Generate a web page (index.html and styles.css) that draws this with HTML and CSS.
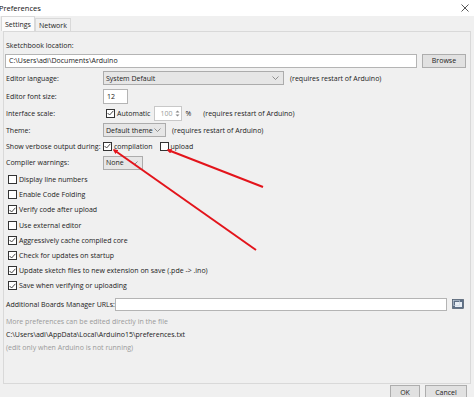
FILE: index.html
```html
<!DOCTYPE html>
<html>
<head>
<meta charset="utf-8">
<link rel="stylesheet" href="styles.css">
</head>
<body>
<div class="titlebar">
  <span class="title">Preferences</span>
  <svg class="close" width="8" height="8" viewBox="0 0 8 8"><path d="M0.5 0.5 L7.5 7.5 M7.5 0.5 L0.5 7.5" stroke="#444" stroke-width="0.9" fill="none"/></svg>
</div>
<div class="tabs">
  <div class="tab active">Settings</div>
  <div class="tab">Network</div>
</div>
<div class="panel">
  <div class="row r-a"><span class="text">Sketchbook location:</span></div>
  <div class="row r-b">
    <div class="field path">C:\Users\adi\Documents\Arduino</div>
    <div class="btn browse">Browse</div>
  </div>
  <div class="row r-c">
    <span class="lbl">Editor language:</span>
    <div class="combo lang"><span>System Default</span><svg class="chev" width="7" height="4" viewBox="0 0 7 4"><path d="M0.5 0.5 L3.5 3.5 L6.5 0.5" stroke="#777" fill="none" stroke-width="0.8"/></svg></div>
    <span class="note">(requires restart of Arduino)</span>
  </div>
  <div class="row r-d">
    <span class="lbl">Editor font size:</span>
    <div class="field size">12</div>
  </div>
  <div class="row r-e">
    <span class="lbl">Interface scale:</span>
    <span class="cb checked"><svg width="7" height="6" viewBox="0 0 7 6"><path d="M0.6 3 L2.6 5 L6.4 0.8" stroke="#333" fill="none" stroke-width="0.9"/></svg></span>
    <span class="cb-text">Automatic</span>
    <div class="spin"><span class="spin-val">100</span><span class="spin-arrows"><svg width="5" height="9" viewBox="0 0 5 9"><path d="M0.5 3.5 L2.5 1.5 L4.5 3.5 Z M0.5 5.5 L2.5 7.5 L4.5 5.5 Z" fill="#888"/></svg></span></div>
    <span class="pct">%</span>
    <span class="note note-scale">(requires restart of Arduino)</span>
  </div>
  <div class="row r-f">
    <span class="lbl">Theme:</span>
    <div class="combo theme"><span>Default theme</span><svg class="chev" width="7" height="4" viewBox="0 0 7 4"><path d="M0.5 0.5 L3.5 3.5 L6.5 0.5" stroke="#777" fill="none" stroke-width="0.8"/></svg></div>
    <span class="note note-theme">(requires restart of Arduino)</span>
  </div>
  <div class="row r-g">
    <span class="lbl">Show verbose output during:</span>
    <span class="cb checked"><svg width="7" height="6" viewBox="0 0 7 6"><path d="M0.6 3 L2.6 5 L6.4 0.8" stroke="#333" fill="none" stroke-width="0.9"/></svg></span>
    <span class="cb-text">compilation</span>
    <span class="cb cb-upload"></span>
    <span class="cb-text">upload</span>
  </div>
  <div class="row r-h">
    <span class="lbl">Compiler warnings:</span>
    <div class="combo warn"><span>None</span><svg class="chev" width="7" height="4" viewBox="0 0 7 4"><path d="M0.5 0.5 L3.5 3.5 L6.5 0.5" stroke="#777" fill="none" stroke-width="0.8"/></svg></div>
  </div>
  <div class="checks">
    <div class="check-row"><span class="cb"></span><span class="cb-text">Display line numbers</span></div>
    <div class="check-row"><span class="cb"></span><span class="cb-text">Enable Code Folding</span></div>
    <div class="check-row"><span class="cb checked"><svg width="7" height="6" viewBox="0 0 7 6"><path d="M0.6 3 L2.6 5 L6.4 0.8" stroke="#333" fill="none" stroke-width="0.9"/></svg></span><span class="cb-text">Verify code after upload</span></div>
    <div class="check-row"><span class="cb"></span><span class="cb-text">Use external editor</span></div>
    <div class="check-row"><span class="cb checked"><svg width="7" height="6" viewBox="0 0 7 6"><path d="M0.6 3 L2.6 5 L6.4 0.8" stroke="#333" fill="none" stroke-width="0.9"/></svg></span><span class="cb-text">Aggressively cache compiled core</span></div>
    <div class="check-row"><span class="cb checked"><svg width="7" height="6" viewBox="0 0 7 6"><path d="M0.6 3 L2.6 5 L6.4 0.8" stroke="#333" fill="none" stroke-width="0.9"/></svg></span><span class="cb-text">Check for updates on startup</span></div>
    <div class="check-row"><span class="cb checked"><svg width="7" height="6" viewBox="0 0 7 6"><path d="M0.6 3 L2.6 5 L6.4 0.8" stroke="#333" fill="none" stroke-width="0.9"/></svg></span><span class="cb-text">Update sketch files to new extension on save (.pde -&gt; .ino)</span></div>
    <div class="check-row"><span class="cb checked"><svg width="7" height="6" viewBox="0 0 7 6"><path d="M0.6 3 L2.6 5 L6.4 0.8" stroke="#333" fill="none" stroke-width="0.9"/></svg></span><span class="cb-text">Save when verifying or uploading</span></div>
  </div>
  <div class="row r-url">
    <span class="lbl-url">Additional Boards Manager URLs:</span>
    <div class="field url"></div>
    <svg class="url-icon" width="12" height="10" viewBox="0 0 12 10">
      <rect x="0.5" y="0.5" width="11" height="9" fill="#5d6f86" stroke="#3e4d60" stroke-width="0.6"/>
      <rect x="3" y="3" width="7" height="5" fill="#e8eef5"/>
      <rect x="1.5" y="1.5" width="6" height="5" fill="none" stroke="#c9d4e0" stroke-width="0.6"/>
    </svg>
  </div>
  <div class="info muted">More preferences can be edited directly in the file</div>
  <div class="info">C:\Users\adi\AppData\Local\Arduino15\preferences.txt</div>
  <div class="info muted">(edit only when Arduino is not running)</div>
</div>
<div class="footer">
  <div class="btn ok">OK</div>
  <div class="btn cancel">Cancel</div>
</div>
<svg class="arrows" width="474" height="397" viewBox="0 0 474 397">
  <defs>
    <marker id="head" markerWidth="5" markerHeight="5" refX="3.5" refY="2.5" orient="auto" markerUnits="userSpaceOnUse">
      <path d="M0 0 L5 2.5 L0 5 Z" fill="#e3141b"/>
    </marker>
  </defs>
  <line x1="263" y1="187" x2="168" y2="150" stroke="#e3141b" stroke-width="2" marker-end="url(#head)"/>
  <line x1="256" y1="250" x2="114" y2="150" stroke="#e3141b" stroke-width="2" marker-end="url(#head)"/>
</svg>
</body>
</html>
```

FILE: styles.css
```css
* { box-sizing: border-box; }

body {
  margin: 0;
  width: 474px;
  height: 397px;
  overflow: hidden;
  position: relative;
  background: #f0f0f0;
  font-family: "Open Sans", "Noto Sans", sans-serif;
  font-size: 7px;
  color: #222;
}

.titlebar {
  height: 16px;
  background: #fff;
  display: flex;
  align-items: center;
  justify-content: space-between;
  padding-right: 5px;
}

.title {
  margin-left: -1px;
  font-size: 7.5px;
  color: #111;
}

.tabs {
  height: 15px;
  display: flex;
  align-items: flex-end;
  padding-left: 1px;
}

.tab {
  height: 13px;
  padding: 0 3px;
  border: 1px solid #d9d9d9;
  border-bottom: none;
  display: flex;
  align-items: center;
  background: #f0f0f0;
}

.tab.active {
  height: 15px;
  background: #fbfbfb;
  padding: 0 3px;
}

.panel {
  margin-left: 3px;
  width: 468px;
  height: 353px;
  border: 1px solid #d9d9d9;
  padding: 6px 0 0 1px;
  display: flex;
  flex-direction: column;
}

.row {
  display: flex;
  align-items: center;
}

.r-a { height: 14px; padding-left: 1px; }
.r-b { height: 17px; }
.r-c { height: 18px; }
.r-d { height: 18px; }
.r-e { height: 16px; }
.r-f { height: 18px; }
.r-g { height: 14px; }
.r-h { height: 19px; }

.lbl {
  width: 98px;
  padding-left: 1px;
  flex: none;
}

.field {
  background: #fff;
  border: 1px solid #b4b4b4;
  display: flex;
  align-items: center;
  padding-left: 3px;
}

.path {
  width: 412px;
  height: 14px;
}

.btn {
  height: 14px;
  background: #e1e1e1;
  border: 1px solid #adadad;
  display: flex;
  align-items: center;
  justify-content: center;
}

.browse {
  width: 44px;
  margin-left: 5px;
}

.combo {
  height: 14px;
  background: #e6e6e6;
  border: 1px solid #acacac;
  display: flex;
  align-items: center;
  justify-content: space-between;
  padding: 0 4px 0 2px;
}

.lang { width: 181px; }
.theme { width: 63px; }
.warn { width: 40px; }

.note {
  margin-left: 6px;
}

.note-scale { margin-left: 12px; }
.note-theme { margin-left: 6px; }

.size {
  width: 25px;
  height: 15px;
}

.cb {
  width: 9px;
  height: 9px;
  flex: none;
  background: #fff;
  border: 1px solid #333;
  display: flex;
  align-items: center;
  justify-content: center;
}

.r-e .cb { margin-left: 3px; }

.cb-text {
  margin-left: 2px;
}

.spin {
  width: 28px;
  height: 15px;
  margin-left: 4px;
  background: #fff;
  border: 1px solid #c8c8c8;
  display: flex;
  align-items: center;
  justify-content: flex-end;
}

.spin-val {
  color: #9a9a9a;
  margin-right: 2px;
}

.spin-arrows {
  width: 7px;
  height: 13px;
  display: flex;
  align-items: center;
  justify-content: center;
}

.pct { margin-left: 3px; }

.cb-upload { margin-left: 7px; }

.checks {
  display: flex;
  flex-direction: column;
}

.check-row {
  height: 15.2px;
  display: flex;
  align-items: center;
  padding-left: 3px;
}

.r-url { height: 21px; }

.lbl-url {
  width: 110px;
  padding-left: 1px;
  flex: none;
}

.url {
  width: 332px;
  height: 13px;
}

.url-icon {
  margin-left: 5px;
}

.info {
  height: 13px;
  display: flex;
  align-items: center;
  padding-left: 1px;
}

.muted { color: #9a9a9a; }

.footer {
  display: flex;
  justify-content: flex-end;
  gap: 5px;
  padding-right: 7px;
  margin-top: 1px;
}

.ok { width: 30px; }
.cancel { width: 42px; }

.arrows {
  position: absolute;
  top: 0;
  left: 0;
  pointer-events: none;
}
```
